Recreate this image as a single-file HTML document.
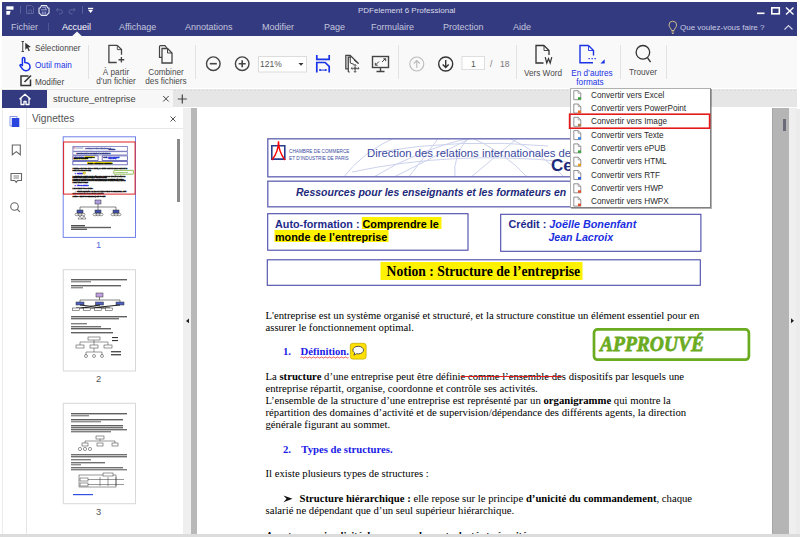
<!DOCTYPE html>
<html><head><meta charset="utf-8">
<style>
*{margin:0;padding:0;box-sizing:border-box}
html,body{width:800px;height:537px;overflow:hidden;background:#fff;font-family:"Liberation Sans",sans-serif}
.a{position:absolute}
.t{position:absolute;white-space:nowrap;line-height:1}
svg{position:absolute;overflow:visible}
#title{left:2px;top:2px;width:795px;height:34px;background:#333a80}
.menu{color:#c4c6dc;font-size:9px;top:23.4px}
#ribbon{left:2px;top:36px;width:795px;height:51.5px;background:#f9f9f9}
.rt{color:#444;font-size:8.2px}
.rc{color:#4a4a4a;font-size:8.2px;text-align:center;width:60px}
.sep{position:absolute;width:1px;background:#e2e2e2}
#tabbar{left:2px;top:89px;width:795px;height:18px;background:#e6e6e6}
#side{left:1.5px;top:108px;width:25px;height:426px;background:#fff;border-left:1px solid #ebebeb;border-right:1px solid #e4e4e4}
#panel{left:26px;top:108px;width:157px;height:426px;background:#fff;border-left:1px solid #e6e6e6}
#docbg{left:183px;top:108px;width:614px;height:426px;background:#efefef}
#page{left:197px;top:108px;width:575px;height:426px;background:#fff}
#bottom{left:0;top:534px;width:800px;height:3px;background:#dcdcdc}
.serif{font-family:"Liberation Serif",serif}
.mi{color:#2a2a2a;font-size:8.2px;left:591px}
.th .t{-webkit-text-stroke:2.5px currentColor}
.th rect{stroke-width:6px}
</style></head><body>
<!-- title bar -->
<div id="title" class="a"></div>
<!-- quick access -->
<svg style="left:0;top:0" width="100" height="20">
  <rect x="6.3" y="6.3" width="7.2" height="3.4" fill="#fff"/>
  <path d="M6.3 10.9h4.3l-1 3.8h-3.3z" fill="#fff"/>
  <line x1="20.5" y1="6" x2="20.5" y2="13.5" stroke="#5a609a" stroke-width="1"/>
  <path d="M26.5 5.5h5l2 2v6h-7z" fill="none" stroke="#5d639c" stroke-width="1"/>
  <path d="M29 13v-3h2.5v3" fill="none" stroke="#5d639c" stroke-width=".8"/>
  <path d="M41.5 5.6h5l1.2 2.2 1.3.4v4.8l-1.3 1.2-1.2 1.2h-5l-1.2-1.2-1.3-1.2v-4.8l1.3-.4z" fill="none" stroke="#e4e6f2" stroke-width="1.1"/><path d="M42.3 7.3h3.4v2M41 9.8h6M42.3 11.5v3M45.7 11.5v3M44 11.5v3" fill="none" stroke="#b8bde0" stroke-width=".8"/>
  <path d="M58 8l-1.8 1.8 1.8 1.8 M56.5 9.8h4a2 2 0 0 1 0 4h-1.5" fill="none" stroke="#5d639c" stroke-width="1"/>
  <path d="M73.5 8l1.8 1.8-1.8 1.8 M75 9.8h-4a2 2 0 0 0 0 4h1.5" fill="none" stroke="#5d639c" stroke-width="1"/>
  <line x1="82.5" y1="6.2" x2="82.5" y2="13.7" stroke="#5a609a" stroke-width="1"/>
  <rect x="88" y="7.8" width="5.2" height="1.2" fill="#fff"/>
  <path d="M88 9.8h5.2l-2.6 3.2z" fill="#fff"/>
</svg>
<div class="t" style="left:358px;top:7px;color:#d8d9e8;font-size:8px">PDFelement 6 Professional</div>
<div class="t menu" style="left:11px">Fichier</div>
<div class="a" style="left:47.5px;top:23px;width:1px;height:7.5px;background:#50568f"></div>
<div class="t menu" style="left:62px;color:#fff">Accueil</div>
<svg style="left:72px;top:31px" width="10" height="6"><path d="M0 5.2L5 0.5 10 5.2z" fill="#f9f9f9"/></svg>
<div class="t menu" style="left:119px">Affichage</div>
<div class="t menu" style="left:185px">Annotations</div>
<div class="t menu" style="left:262px">Modifier</div>
<div class="t menu" style="left:324px">Page</div>
<div class="t menu" style="left:371px">Formulaire</div>
<div class="t menu" style="left:443px">Protection</div>
<div class="t menu" style="left:513px">Aide</div>
<!-- window controls -->
<svg style="left:750px;top:0" width="50" height="36">
  <rect x="7" y="12.5" width="7.5" height="1.6" fill="#fff"/>
  <rect x="21.8" y="7.8" width="7.5" height="6" fill="none" stroke="#fff" stroke-width="1.6"/>
  <path d="M36 7.5l7.5 7 M43.5 7.5l-7.5 7" stroke="#fff" stroke-width="1.4"/>
  <path d="M34.5 29.5l4-4 4 4" fill="none" stroke="#d0d2e4" stroke-width="1.2"/>
</svg>
<svg style="left:666px;top:20px" width="14" height="16">
  <path d="M5.5 10.5c0-2-2.5-3-2.5-5.5a3.8 3.8 0 0 1 7.6 0c0 2.5-2.5 3.5-2.5 5.5z" fill="none" stroke="#c9b98a" stroke-width="1"/>
  <path d="M5.5 12h2.6M6 13.5h1.6" stroke="#c9b98a" stroke-width="1"/>
</svg>
<div class="t" style="left:680px;top:24px;color:#c9cbe0;font-size:8px">Que voulez-vous faire ?</div>

<!-- ribbon -->
<div id="ribbon" class="a"></div>
<svg style="left:0;top:36px" width="800" height="53">
  <!-- select -->
  <path d="M21.5 5.5h2.5M22.75 5.5v10M21.5 15.5h2.5" stroke="#444" stroke-width="1" fill="none"/>
  <path d="M25.3 6.8l5.6 4.2-2.6.4 1.6 3.2-1.2.6-1.6-3.2-1.8 1.8z" fill="#333"/>
  <!-- hand -->
  <path d="M22.4 29.5V22.6a1.2 1.2 0 0 1 2.4 0v4c2.2 .2 4.4 1 5 2.6.5 1.5.2 3.2-.8 4.3-.9 1-2.2 1.3-3.5 1.2-1.4-.1-2.4-.8-3.1-1.8l-2.3-3.2c-.5-.7.4-1.6 1.1-1z" fill="none" stroke="#1a33e6" stroke-width="1.5" stroke-linejoin="round"/>
  <!-- modify -->
  <path d="M28.5 40H21v9.5h9.5v-6" fill="none" stroke="#333" stroke-width="1.5"/>
  <path d="M24.5 46l6.5-6.5" stroke="#333" stroke-width="1.6"/>
  <!-- a partir -->
  <path d="M117.3 9.4H108.9V26.5h7.8" fill="none" stroke="#444" stroke-width="1.3"/>
  <path d="M117.3 9.4l4.2 4.2v5.2" fill="none" stroke="#444" stroke-width="1.3"/>
  <path d="M117.3 9.4v4.2h4.2" fill="none" stroke="#444" stroke-width=".9"/>
  <path d="M121.4 20.9v5.7M118.55 23.75h5.7" stroke="#444" stroke-width="1.3"/>
  <!-- combiner -->
  <path d="M162.3 21.3H159.5V10.6a1 1 0 0 1 1-1H165l1.8 2.4" fill="none" stroke="#444" stroke-width="1.2"/>
  <path d="M162 12.5h5.5l4.5 4.5v10h-10z" fill="#f9f9f9" stroke="#444" stroke-width="1.3"/>
  <path d="M167.5 12.5v4.5h4.5" fill="none" stroke="#444" stroke-width="1"/>
  <!-- zoom out/in -->
  <circle cx="213.3" cy="27.7" r="6.8" fill="none" stroke="#444" stroke-width="1.4"/>
  <path d="M209.8 27.7h7" stroke="#444" stroke-width="1.6"/>
  <circle cx="242.2" cy="27.7" r="6.8" fill="none" stroke="#444" stroke-width="1.4"/>
  <path d="M238.7 27.7h7M242.2 24.2v7" stroke="#444" stroke-width="1.6"/>
  <!-- zoom box -->
  <rect x="258.5" y="20.5" width="48" height="15.5" fill="#fff" stroke="#dcdcdc" stroke-width="1"/>
  <path d="M298.5 27h5l-2.5 2.8z" fill="#333"/>
  <!-- fit width (blue) -->
  <path d="M316.8 19v4.4h12.4v-4.4" fill="none" stroke="#1a33e6" stroke-width="1.7"/>
  <path d="M316.8 36.6v-10.1h8.3l4.1 3.8v6.3" fill="none" stroke="#1a33e6" stroke-width="1.7"/>
  <path d="M320 34.1h5.8" stroke="#1a33e6" stroke-width="1"/>
  <circle cx="320" cy="34.1" r="1" fill="#1a33e6"/><circle cx="325.8" cy="34.1" r="1" fill="#1a33e6"/>
  <!-- page move -->
  <path d="M350.3 19.3h-4.5v13.5h2.4" fill="#ddd" stroke="#444" stroke-width="1.2"/>
  <path d="M348.3 36v-14.8h2.2" fill="none" stroke="#444" stroke-width="1.2"/>
  <path d="M350 19.3l8.5 8.2" fill="none" stroke="#444" stroke-width="1.2"/>
  <path d="M350.3 19.5v7.5l4 1.5M354 24.2l4.5 3.3" fill="none" stroke="#444" stroke-width="1"/>
  <path d="M348.3 36h1.5" stroke="#444" stroke-width="1.2"/>
  <circle cx="355.1" cy="32.4" r="1.6" fill="#999"/>
  <path d="M355.1 28.5v7.8M351.2 32.4h7.8" stroke="#555" stroke-width=".9"/>
  <path d="M354 29.6l1.1-1.1 1.1 1.1M354 35.2l1.1 1.1 1.1-1.1M352.3 31.3l-1.1 1.1 1.1 1.1M357.9 31.3l1.1 1.1-1.1 1.1" fill="none" stroke="#444" stroke-width="1"/>
  <!-- monitor -->
  <rect x="372.5" y="20.5" width="16" height="11" fill="none" stroke="#444" stroke-width="1.4"/>
  <path d="M380.5 31.5v3.5M376.5 35.5h8" stroke="#444" stroke-width="1.4"/>
  <path d="M375.5 29l3.5-3.5M385.5 22.5l-3.5 3.5" stroke="#444" stroke-width="1"/>
  <path d="M375.3 26.8v2.4h2.4M385.7 25.2v-2.4h-2.4" fill="none" stroke="#444" stroke-width="1"/>
  <!-- up / down -->
  <circle cx="416.8" cy="28" r="7" fill="none" stroke="#bbb" stroke-width="1.1"/>
  <path d="M416.8 32v-7.5M413.8 27.5l3-3 3 3" fill="none" stroke="#bbb" stroke-width="1.1"/>
  <circle cx="445.7" cy="28" r="7" fill="none" stroke="#333" stroke-width="1.4"/>
  <path d="M445.7 24v7.5M442.7 28.5l3 3 3-3" fill="none" stroke="#333" stroke-width="1.4"/>
  <rect x="462" y="20.5" width="22.5" height="13" fill="#fff" stroke="#dedede" stroke-width="1"/>
  <!-- vers word -->
  <path d="M544 9.5h-8v17.5h7.5" fill="none" stroke="#333" stroke-width="1.3"/>
  <path d="M544 9.5l5 5v4.5" fill="none" stroke="#333" stroke-width="1.3"/>
  <path d="M544 9.5v5h5" fill="none" stroke="#333" stroke-width=".9"/>
  <path d="M545.2 21.2l1.6 5.8 1.7-4.4 1.7 4.4 1.6-5.8" fill="none" stroke="#333" stroke-width="1.2"/>
  <!-- autres formats -->
  <path d="M588.5 9.5h-8.5v17.3h13" fill="none" stroke="#1a33e6" stroke-width="1.4"/>
  <path d="M588.5 9.5l5 5v5" fill="none" stroke="#1a33e6" stroke-width="1.4"/>
  <path d="M588.5 9.5v5h5" fill="none" stroke="#1a33e6" stroke-width=".9"/>
  <path d="M588.5 22.7h1.3M591.5 22.7h1.3M594.5 22.7h1.3" stroke="#1a33e6" stroke-width="1.3"/>
  <path d="M604.7 23.3v4.3h-4.3z" fill="#1a33e6"/>
  <!-- trouver -->
  <circle cx="642.9" cy="16.3" r="6.8" fill="none" stroke="#333" stroke-width="1.3"/>
  <path d="M647.4 21.6l3.2 4.6" stroke="#333" stroke-width="1.4"/>
</svg>
<div class="t rt" style="left:35px;top:45px">Sélectionner</div>
<div class="t rt" style="left:35px;top:61.5px;color:#1a33e6">Outil main</div>
<div class="t rt" style="left:35px;top:78.5px">Modifier</div>
<div class="sep" style="left:88px;top:45px;height:34px"></div>
<div class="t rc" style="left:86px;top:69px">À partir</div>
<div class="t rc" style="left:86px;top:78px">d’un fichier</div>
<div class="t rc" style="left:136px;top:69px">Combiner</div>
<div class="t rc" style="left:136px;top:78px">des fichiers</div>
<div class="sep" style="left:195px;top:45px;height:34px"></div>
<div class="t" style="left:260px;top:60px;color:#555;font-size:8.5px">121%</div>
<div class="sep" style="left:398px;top:45px;height:34px"></div>
<div class="t" style="left:471px;top:60px;color:#555;font-size:8.5px">1</div>
<div class="t" style="left:490px;top:60px;color:#777;font-size:8.5px">/</div>
<div class="t" style="left:500px;top:60px;color:#777;font-size:8.5px">18</div>
<div class="sep" style="left:516px;top:45px;height:34px"></div>
<div class="t rc" style="left:513px;top:69.5px">Vers Word</div>
<div class="t rc" style="left:562px;top:69.5px;color:#1a33e6">En d’autres</div>
<div class="t rc" style="left:560px;top:78.5px;color:#1a33e6">formats</div>
<div class="sep" style="left:620px;top:45px;height:34px"></div>
<div class="t rc" style="left:613px;top:69px">Trouver</div>
<div class="sep" style="left:666px;top:45px;height:34px"></div>

<!-- tab bar -->
<div id="tabbar" class="a"></div><div class="a" style="left:173.6px;top:89.5px;width:623px;height:1px;background:repeating-linear-gradient(90deg,#d9d9d9 0 2px,#e9e9e9 2px 4px)"></div>
<div class="a" style="left:2px;top:90px;width:45px;height:18px;background:#333a80"></div>
<svg style="left:17px;top:91px" width="16" height="16">
  <path d="M2.5 8.2L8 3.2l5.5 5M4 7v6.5h3v-3h2v3h3V7" fill="none" stroke="#fff" stroke-width="1.3" stroke-linejoin="round"/>
</svg>
<div class="a" style="left:47px;top:90px;width:126px;height:18px;background:#f7f7f7"></div>
<div class="t" style="left:53px;top:95px;color:#444;font-size:9.3px">structure_entreprise</div>
<svg style="left:160px;top:92px" width="30" height="14">
  <path d="M3.2 4l5.5 5.5M8.7 4l-5.5 5.5" stroke="#444" stroke-width="1"/>
  <path d="M22.3 2.5v9M17.8 7h9" stroke="#444" stroke-width="1.2"/>
</svg>

<!-- left -->
<div id="side" class="a"></div>
<svg style="left:2px;top:108px" width="24" height="110">
  <path d="M8 8.5h7v2" fill="none" stroke="#8d9ae8" stroke-width="1"/>
  <path d="M8 8.5v9.5h2" fill="none" stroke="#8d9ae8" stroke-width="1"/>
  <rect x="9.8" y="10" width="7.5" height="9" fill="#2a44e0"/>
  <path d="M10.3 46.8v-9.8h8v9.8l-4-3.2z" fill="none" stroke="#666" stroke-width="1.1"/>
  <path d="M9 65.5h10.5v7h-3.8l-1.5 1.8-1.5-1.8h-3.7z" fill="none" stroke="#666" stroke-width="1.1"/>
  <path d="M11.5 68h5.5M11.5 70h5.5" stroke="#666" stroke-width=".8"/>
  <circle cx="12.5" cy="98.5" r="3.8" fill="none" stroke="#666" stroke-width="1.1"/>
  <path d="M15.2 101.2l2.6 2.6" stroke="#666" stroke-width="1.2"/>
</svg>
<div id="panel" class="a"></div>
<div class="t" style="left:32px;top:114px;color:#555;font-size:10.2px">Vignettes</div>
<svg style="left:168px;top:114px" width="10" height="10"><path d="M2.5 2.5l5 5M7.5 2.5l-5 5" stroke="#555" stroke-width="1"/></svg>
<div class="a" style="left:27px;top:128px;width:156px;height:1px;background:#e8e8e8"></div>
<div class="a" style="left:176.5px;top:139px;width:3px;height:63px;background:#8a8a8a"></div>
<svg style="left:0;top:0" width="200" height="537">
<rect x="63.2" y="136.8" width="72.3" height="100.6" fill="#fff" stroke="#7080e8" stroke-width="1"/><rect x="95" y="200" width="6" height="4" fill="#b0a0e0" stroke="#333" stroke-width=".5"/><path d="M98 204v3M80 210v-3h36v3M98 207v3" fill="none" stroke="#333" stroke-width=".6"/><rect x="77" y="210" width="6" height="3" fill="#4050b0" stroke="#333" stroke-width=".5"/><ellipse cx="77" cy="214.5" rx="2" ry="1.3" fill="none" stroke="#333" stroke-width=".5"/><ellipse cx="83" cy="214.5" rx="2" ry="1.3" fill="none" stroke="#333" stroke-width=".5"/><ellipse cx="80" cy="214.5" rx="2" ry="1.3" fill="none" stroke="#333" stroke-width=".5"/><rect x="95" y="210" width="6" height="3" fill="#4050b0" stroke="#333" stroke-width=".5"/><ellipse cx="95" cy="214.5" rx="2" ry="1.3" fill="none" stroke="#333" stroke-width=".5"/><ellipse cx="101" cy="214.5" rx="2" ry="1.3" fill="none" stroke="#333" stroke-width=".5"/><ellipse cx="98" cy="214.5" rx="2" ry="1.3" fill="none" stroke="#333" stroke-width=".5"/><rect x="113" y="210" width="6" height="3" fill="#4050b0" stroke="#333" stroke-width=".5"/><ellipse cx="113" cy="214.5" rx="2" ry="1.3" fill="none" stroke="#333" stroke-width=".5"/><ellipse cx="119" cy="214.5" rx="2" ry="1.3" fill="none" stroke="#333" stroke-width=".5"/><ellipse cx="116" cy="214.5" rx="2" ry="1.3" fill="none" stroke="#333" stroke-width=".5"/><path d="M80 216l-2 3 4 0z M84 216l-2 3h4z" fill="none" stroke="#333" stroke-width=".5"/><rect x="71" y="225" width="14" height="1.4" fill="#505050"/><rect x="71" y="226.8" width="40" height="1.4" fill="#606060"/><rect x="71" y="228.6" width="16" height="1.4" fill="#606060"/><rect x="63.3" y="269.7" width="72.2" height="101.3" fill="#fff" stroke="#d8d8d8" stroke-width="1"/><rect x="71" y="279" width="56" height="1.4" fill="#606060"/><rect x="71" y="281" width="20" height="1.4" fill="#909090"/><rect x="71" y="285" width="50" height="1.4" fill="#606060"/><rect x="71" y="287" width="12" height="1.4" fill="#909090"/><rect x="96" y="293" width="7" height="4" fill="#c0a0e0" stroke="#333" stroke-width=".5"/><path d="M99.5 297v3M80 302v-2h40v2" fill="none" stroke="#333" stroke-width=".6"/><rect x="76" y="302" width="8" height="3" fill="#5060c0" stroke="#333" stroke-width=".5"/><rect x="95.5" y="302" width="8" height="3" fill="#5060c0" stroke="#333" stroke-width=".5"/><rect x="116" y="302" width="8" height="3" fill="#5060c0" stroke="#333" stroke-width=".5"/><path d="M76 308h34M80 305l25 3M100 305l-20 3M120 305l-30 3" stroke="#222" stroke-width="1.2"/><rect x="72.5" y="308" width="7" height="2.5" fill="#fff" stroke="#333" stroke-width=".5"/><rect x="83.5" y="308" width="7" height="2.5" fill="#fff" stroke="#333" stroke-width=".5"/><rect x="94.5" y="308" width="7" height="2.5" fill="#fff" stroke="#333" stroke-width=".5"/><rect x="105.5" y="308" width="7" height="2.5" fill="#fff" stroke="#333" stroke-width=".5"/><rect x="71" y="316" width="56" height="1.4" fill="#606060"/><rect x="71" y="318" width="48" height="1.4" fill="#707070"/><rect x="71" y="323" width="16" height="1.4" fill="#808080"/><rect x="71" y="326" width="30" height="1.4" fill="#707070"/><rect x="71" y="328" width="40" height="1.4" fill="#606060"/><rect x="71" y="332" width="42" height="1.4" fill="#606060"/><rect x="88" y="337" width="12" height="3" fill="#fff" stroke="#333" stroke-width=".5"/><path d="M94 340v2M80 345v-3h28v3M94 342v3" fill="none" stroke="#333" stroke-width=".5"/><rect x="76" y="345" width="8" height="3" fill="#fff" stroke="#333" stroke-width=".5"/><rect x="90" y="345" width="8" height="3" fill="#fff" stroke="#333" stroke-width=".5"/><rect x="104" y="345" width="8" height="3" fill="#fff" stroke="#333" stroke-width=".5"/><path d="M94 348v4M86 355v-3h16v3" fill="none" stroke="#333" stroke-width=".5"/><circle cx="86" cy="356" r="1.5" fill="none" stroke="#333" stroke-width=".5"/><circle cx="94" cy="356" r="1.5" fill="none" stroke="#333" stroke-width=".5"/><circle cx="102" cy="356" r="1.5" fill="none" stroke="#333" stroke-width=".5"/><rect x="112" y="337" width="6" height="1.1" fill="#333"/><rect x="112" y="340" width="6" height="1.1" fill="#333"/><rect x="111" y="351" width="10" height="1.4" fill="#505050"/><rect x="111" y="354" width="10" height="1.4" fill="#505050"/><rect x="63.3" y="403.3" width="72.2" height="100.4" fill="#fff" stroke="#d8d8d8" stroke-width="1"/><rect x="71" y="413" width="56" height="1.4" fill="#606060"/><rect x="71" y="415" width="18" height="1.4" fill="#909090"/><rect x="71" y="419" width="52" height="1.4" fill="#606060"/><rect x="71" y="421" width="30" height="1.4" fill="#909090"/><rect x="71" y="425" width="52" height="1.4" fill="#606060"/><rect x="71" y="427" width="52" height="1.4" fill="#707070"/><rect x="71" y="429" width="56" height="1.4" fill="#707070"/><rect x="71" y="431" width="40" height="1.4" fill="#808080"/><rect x="96" y="436" width="8" height="3" fill="#fff" stroke="#333" stroke-width=".5"/><path d="M100 439v2M85 443v-2h30v2" fill="none" stroke="#333" stroke-width=".5"/><rect x="82" y="443" width="6" height="3" fill="#fff" stroke="#333" stroke-width=".5"/><rect x="97" y="443" width="6" height="3" fill="#fff" stroke="#333" stroke-width=".5"/><rect x="112" y="443" width="6" height="3" fill="#fff" stroke="#333" stroke-width=".5"/><circle cx="80" cy="449" r="1.6" fill="none" stroke="#333" stroke-width=".5"/><circle cx="85" cy="449" r="1.6" fill="none" stroke="#333" stroke-width=".5"/><circle cx="90" cy="449" r="1.6" fill="none" stroke="#333" stroke-width=".5"/><rect x="71" y="454" width="56" height="1.4" fill="#707070"/><rect x="71" y="456" width="56" height="1.4" fill="#707070"/><rect x="71" y="459" width="20" height="1.4" fill="#808080"/><rect x="71" y="462" width="34" height="1.4" fill="#707070"/><rect x="71" y="464" width="10" height="1.4" fill="#909090"/><rect x="71" y="467" width="52" height="1.4" fill="#707070"/><rect x="71" y="469" width="56" height="1.4" fill="#808080"/><rect x="79" y="475" width="37" height="12" fill="none" stroke="#333" stroke-width=".5"/><rect x="103" y="473" width="10" height="3" fill="#fff" stroke="#333" stroke-width=".5"/><rect x="80" y="478" width="8" height="3" fill="none" stroke="#333" stroke-width=".5"/><rect x="80" y="483" width="8" height="3" fill="none" stroke="#333" stroke-width=".5"/><path d="M88 479.5h36M88 484.5h36M100 477v9M108 477v9M116 477v9" stroke="#333" stroke-width=".5"/><rect x="73" y="494" width="20" height="1.2" fill="#3050e0"/></svg>
<div class="a" style="left:63.7px;top:137px;width:71.3px;height:99.8px;overflow:hidden"><div class="a th" style="left:0;top:0;width:800px;height:537px;transform-origin:0 0;transform:scale(0.1257) translate(-197px,-64px)"><div class="a"  style="left:0;top:0">
<svg style="left:0;top:0" width="800" height="537">
  <defs><clipPath id="hb2"><rect x="268" y="139" width="432" height="37.5"/></clipPath></defs>
  <g clip-path="url(#hb2)" fill="none" stroke="#ccd2ec" stroke-width="1">
    <path d="M343 178 Q362 152 398 136"/>
    <path d="M372 178 Q420 148 478 136"/>
    <path d="M408 178 Q428 152 440 136"/>
    <path d="M455 178 Q452 155 470 136"/>
    <path d="M468 136 Q505 152 528 178"/>
    <path d="M505 136 Q545 155 565 178"/>
    <path d="M352 172 Q455 150 568 162"/>
    <path d="M378 152 Q460 138 548 146"/>
    <path d="M392 178 L475 136"/>
    <path d="M520 136 L470 178"/>
  </g>
  <rect x="267.8" y="138.8" width="433" height="38" fill="none" stroke="#6c6cb8" stroke-width="1.4"/>
  <rect x="267.8" y="181.2" width="433" height="25.6" fill="none" stroke="#6c6cb8" stroke-width="1.4"/>
  <rect x="267.7" y="213.7" width="200.3" height="36.5" fill="none" stroke="#4a4aaa" stroke-width="1.1"/>
  <rect x="500.7" y="214.3" width="200.2" height="37" fill="none" stroke="#4a4aaa" stroke-width="1.1"/>
  <rect x="267.3" y="259.8" width="433" height="25.5" fill="none" stroke="#4a4aaa" stroke-width="1.1"/>
  <!-- logo -->
  <path d="M271.8 145.8h13v13.3h-13z" fill="none" stroke="#2a3c8e" stroke-width="1.6"/>
  <path d="M278.5 141.3 C278.5 150 276 155 272 160 M278.5 141.3 C278.5 150 281 155 285 160" fill="none" stroke="#f00" stroke-width="1.4"/>
  <!-- highlights -->
  <rect x="361.8" y="217" width="79.7" height="12" fill="#fff200"/>
  <rect x="274.5" y="230" width="114" height="12" fill="#fff200"/>
  <rect x="380.5" y="262" width="202" height="18" fill="#fff200"/>
</svg>
<div class="t" style="left:289px;top:150px;color:#3b4aa0;font-size:4.7px">CHAMBRE DE COMMERCE</div>
<div class="t" style="left:289px;top:156.5px;color:#3b4aa0;font-size:4.7px">ET D’INDUSTRIE DE PARIS</div>
<div class="t" style="left:367px;top:147.5px;color:#3b4aa0;font-size:11.3px">Direction des relations internationales de</div>
<div class="t" style="left:551px;top:157px;color:#1d2a7a;font-size:17px;font-weight:bold">Centre</div>
<div class="t" style="left:296px;top:187px;color:#1d2a7a;font-size:10.5px;font-weight:bold;font-style:italic">Ressources pour les enseignants et les formateurs en</div>
<div class="t" style="left:275px;top:219px;color:#1d2a8a;font-size:10.8px;font-weight:bold">Auto-formation : <span style="color:#000">Comprendre le</span></div>
<div class="t" style="left:275px;top:231.5px;color:#000;font-size:10.8px;font-weight:bold">monde de l’entreprise</div>
<div class="t" style="left:508.5px;top:219px;color:#1d2a8a;font-size:10.8px;font-weight:bold">Crédit : <span style="color:#1a2ee0;font-style:italic">Joëlle Bonenfant</span></div>
<div class="t" style="left:548.4px;top:231.5px;color:#1a2ee0;font-size:10.6px;font-weight:bold;font-style:italic">Jean Lacroix</div>
<div class="t serif" style="left:386.6px;top:265px;color:#000;font-size:13.6px;font-weight:bold">Notion : Structure de l’entreprise</div>

<div class="t serif" style="left:265.5px;top:310px;font-size:10.7px;color:#000">L'entreprise est un système organisé et structuré, et la structure constitue un élément essentiel pour en</div>
<div class="t serif" style="left:265.5px;top:321.5px;font-size:10.7px;color:#000">assurer le fonctionnement optimal.</div>
<div class="t serif" style="left:283px;top:346px;font-size:10.7px;color:#1a1ae6;font-weight:bold">1.</div>
<div class="t serif" style="left:300.5px;top:346px;font-size:10.7px;color:#1a1ae6;font-weight:bold">Définition.</div>
<svg style="left:0;top:0" width="800" height="537">
  <path d="M300.5 357.5 q1 -1 2 0 t2 0 t2 0 t2 0 t2 0 t2 0 t2 0 t2 0 t2 0 t2 0 t2 0 t2 0 t2 0 t2 0 t2 0 t2 0 t2 0 t2 0 t2 0 t2 0 t2 0 t2 0 t2 0 t2 0" fill="none" stroke="#e83a3a" stroke-width=".9"/>
  <rect x="350.3" y="343.3" width="15.8" height="15.8" rx="2.5" fill="#ffe000" stroke="#c8b000" stroke-width=".8"/>
  <path d="M358.2 346.3c-3.2 0-5.3 1.8-5.3 3.8 0 1.2.7 2.2 1.8 2.9l-.8 2.2 2.6-1.5c.5.1 1.1.2 1.7.2 3.2 0 5.3-1.8 5.3-3.8s-2.1-3.8-5.3-3.8z" fill="#fff" stroke="#444" stroke-width=".9"/>
  <rect x="594" y="329.4" width="154.9" height="30.3" rx="3.5" fill="none" stroke="#6aab1f" stroke-width="2.7"/>
</svg>
<div class="t serif" style="left:600px;top:333.5px;font-size:19.5px;color:#6aab1f;font-weight:bold;font-style:italic;transform:scaleY(1.08);transform-origin:0 0;-webkit-text-stroke:.7px #6aab1f">APPROUVÉ</div>

<div class="t serif" style="left:265.5px;top:370.5px;font-size:10.7px;color:#000">La <b>structure</b> d’une entreprise peut être défini<span style="text-decoration:line-through;text-decoration-color:#e02020">e comme l’ensemble de</span>s dispositifs par lesquels une</div>
<div class="t serif" style="left:265.5px;top:382.5px;font-size:10.7px;color:#000">entreprise répartit, organise, coordonne et contrôle ses activités.</div>
<div class="t serif" style="left:265.5px;top:395px;font-size:10.7px;color:#000">L’ensemble de la structure d’une entreprise est représenté par un <b>organigramme</b> qui montre la</div>
<div class="t serif" style="left:265.5px;top:407px;font-size:10.7px;color:#000">répartition des domaines d’activité et de supervision/dépendance des différents agents, la direction</div>
<div class="t serif" style="left:265.5px;top:419px;font-size:10.7px;color:#000">générale figurant au sommet.</div>
<div class="t serif" style="left:283px;top:444px;font-size:10.7px;color:#1a1ae6;font-weight:bold">2.</div>
<div class="t serif" style="left:301.3px;top:444px;font-size:10.7px;color:#1a1ae6;font-weight:bold">Types de structures.</div>
<div class="t serif" style="left:265.5px;top:468.3px;font-size:10.7px;color:#000">Il existe plusieurs types de structures :</div>
<svg style="left:283px;top:494px" width="12" height="10"><path d="M0.5 1.5L9.5 4.8 0.5 8.2 3.5 4.8z" fill="#111"/></svg>
<div class="t serif" style="left:299.5px;top:493px;font-size:10.7px;color:#000"><b>Structure hiérarchique :</b> elle repose sur le principe <b>d’unicité du commandement</b>, chaque</div>
<div class="t serif" style="left:265.5px;top:504.5px;font-size:10.7px;color:#000">salarié ne dépendant que d’un seul supérieur hiérarchique.</div>
<div class="t serif" style="left:265.5px;top:530px;font-size:10.7px;color:#000;font-style:italic;font-weight:bold;text-decoration:underline">Avantages : simplicité du commandement, clarté et sécurité</div>
</div></div></div>
<svg style="left:0;top:0" width="200" height="300"><rect x="63.6" y="142" width="71.5" height="52.1" fill="none" stroke="#e02020" stroke-width="1"/></svg>
<div class="t" style="left:96px;top:241px;color:#5a6ae0;font-size:9.3px">1</div><div class="t" style="left:96px;top:374.5px;color:#555;font-size:9.3px">2</div><div class="t" style="left:96px;top:508px;color:#555;font-size:9.3px">3</div>


<div id="docbg" class="a"></div>
<div id="page" class="a"></div>
<!-- PAGE CONTENT -->
<div class="a" id="pc" style="left:0;top:0">
<svg style="left:0;top:0" width="800" height="537">
  <defs><clipPath id="hb"><rect x="268" y="139" width="432" height="37.5"/></clipPath></defs>
  <g clip-path="url(#hb)" fill="none" stroke="#ccd2ec" stroke-width="1">
    <path d="M343 178 Q362 152 398 136"/>
    <path d="M372 178 Q420 148 478 136"/>
    <path d="M408 178 Q428 152 440 136"/>
    <path d="M455 178 Q452 155 470 136"/>
    <path d="M468 136 Q505 152 528 178"/>
    <path d="M505 136 Q545 155 565 178"/>
    <path d="M352 172 Q455 150 568 162"/>
    <path d="M378 152 Q460 138 548 146"/>
    <path d="M392 178 L475 136"/>
    <path d="M520 136 L470 178"/>
  </g>
  <rect x="267.8" y="138.8" width="433" height="38" fill="none" stroke="#6c6cb8" stroke-width="1.4"/>
  <rect x="267.8" y="181.2" width="433" height="25.6" fill="none" stroke="#6c6cb8" stroke-width="1.4"/>
  <rect x="267.7" y="213.7" width="200.3" height="36.5" fill="none" stroke="#4a4aaa" stroke-width="1.1"/>
  <rect x="500.7" y="214.3" width="200.2" height="37" fill="none" stroke="#4a4aaa" stroke-width="1.1"/>
  <rect x="267.3" y="259.8" width="433" height="25.5" fill="none" stroke="#4a4aaa" stroke-width="1.1"/>
  <!-- logo -->
  <path d="M271.8 145.8h13v13.3h-13z" fill="none" stroke="#2a3c8e" stroke-width="1.6"/>
  <path d="M278.5 141.3 C278.5 150 276 155 272 160 M278.5 141.3 C278.5 150 281 155 285 160" fill="none" stroke="#f00" stroke-width="1.4"/>
  <!-- highlights -->
  <rect x="361.8" y="217" width="79.7" height="12" fill="#fff200"/>
  <rect x="274.5" y="230" width="114" height="12" fill="#fff200"/>
  <rect x="380.5" y="262" width="202" height="18" fill="#fff200"/>
</svg>
<div class="t" style="left:289px;top:150px;color:#3b4aa0;font-size:4.7px">CHAMBRE DE COMMERCE</div>
<div class="t" style="left:289px;top:156.5px;color:#3b4aa0;font-size:4.7px">ET D’INDUSTRIE DE PARIS</div>
<div class="t" style="left:367px;top:147.5px;color:#3b4aa0;font-size:11.3px">Direction des relations internationales de</div>
<div class="t" style="left:551px;top:157px;color:#1d2a7a;font-size:17px;font-weight:bold">Centre</div>
<div class="t" style="left:296px;top:187px;color:#1d2a7a;font-size:10.5px;font-weight:bold;font-style:italic">Ressources pour les enseignants et les formateurs en</div>
<div class="t" style="left:275px;top:219px;color:#1d2a8a;font-size:10.8px;font-weight:bold">Auto-formation : <span style="color:#000">Comprendre le</span></div>
<div class="t" style="left:275px;top:231.5px;color:#000;font-size:10.8px;font-weight:bold">monde de l’entreprise</div>
<div class="t" style="left:508.5px;top:219px;color:#1d2a8a;font-size:10.8px;font-weight:bold">Crédit : <span style="color:#1a2ee0;font-style:italic">Joëlle Bonenfant</span></div>
<div class="t" style="left:548.4px;top:231.5px;color:#1a2ee0;font-size:10.6px;font-weight:bold;font-style:italic">Jean Lacroix</div>
<div class="t serif" style="left:386.6px;top:265px;color:#000;font-size:13.6px;font-weight:bold">Notion : Structure de l’entreprise</div>

<div class="t serif" style="left:265.5px;top:310px;font-size:10.7px;color:#000">L'entreprise est un système organisé et structuré, et la structure constitue un élément essentiel pour en</div>
<div class="t serif" style="left:265.5px;top:321.5px;font-size:10.7px;color:#000">assurer le fonctionnement optimal.</div>
<div class="t serif" style="left:283px;top:346px;font-size:10.7px;color:#1a1ae6;font-weight:bold">1.</div>
<div class="t serif" style="left:300.5px;top:346px;font-size:10.7px;color:#1a1ae6;font-weight:bold">Définition.</div>
<svg style="left:0;top:0" width="800" height="537">
  <path d="M300.5 357.5 q1 -1 2 0 t2 0 t2 0 t2 0 t2 0 t2 0 t2 0 t2 0 t2 0 t2 0 t2 0 t2 0 t2 0 t2 0 t2 0 t2 0 t2 0 t2 0 t2 0 t2 0 t2 0 t2 0 t2 0 t2 0" fill="none" stroke="#e83a3a" stroke-width=".9"/>
  <rect x="350.3" y="343.3" width="15.8" height="15.8" rx="2.5" fill="#ffe000" stroke="#c8b000" stroke-width=".8"/>
  <path d="M358.2 346.3c-3.2 0-5.3 1.8-5.3 3.8 0 1.2.7 2.2 1.8 2.9l-.8 2.2 2.6-1.5c.5.1 1.1.2 1.7.2 3.2 0 5.3-1.8 5.3-3.8s-2.1-3.8-5.3-3.8z" fill="#fff" stroke="#444" stroke-width=".9"/>
  <rect x="594" y="329.4" width="154.9" height="30.3" rx="3.5" fill="none" stroke="#6aab1f" stroke-width="2.7"/>
</svg>
<div class="t serif" style="left:600px;top:333.5px;font-size:19.5px;color:#6aab1f;font-weight:bold;font-style:italic;transform:scaleY(1.08);transform-origin:0 0;-webkit-text-stroke:.7px #6aab1f">APPROUVÉ</div>

<div class="t serif" style="left:265.5px;top:370.5px;font-size:10.7px;color:#000">La <b>structure</b> d’une entreprise peut être défini<span style="text-decoration:line-through;text-decoration-color:#e02020">e comme l’ensemble de</span>s dispositifs par lesquels une</div>
<div class="t serif" style="left:265.5px;top:382.5px;font-size:10.7px;color:#000">entreprise répartit, organise, coordonne et contrôle ses activités.</div>
<div class="t serif" style="left:265.5px;top:395px;font-size:10.7px;color:#000">L’ensemble de la structure d’une entreprise est représenté par un <b>organigramme</b> qui montre la</div>
<div class="t serif" style="left:265.5px;top:407px;font-size:10.7px;color:#000">répartition des domaines d’activité et de supervision/dépendance des différents agents, la direction</div>
<div class="t serif" style="left:265.5px;top:419px;font-size:10.7px;color:#000">générale figurant au sommet.</div>
<div class="t serif" style="left:283px;top:444px;font-size:10.7px;color:#1a1ae6;font-weight:bold">2.</div>
<div class="t serif" style="left:301.3px;top:444px;font-size:10.7px;color:#1a1ae6;font-weight:bold">Types de structures.</div>
<div class="t serif" style="left:265.5px;top:468.3px;font-size:10.7px;color:#000">Il existe plusieurs types de structures :</div>
<svg style="left:283px;top:494px" width="12" height="10"><path d="M0.5 1.5L9.5 4.8 0.5 8.2 3.5 4.8z" fill="#111"/></svg>
<div class="t serif" style="left:299.5px;top:493px;font-size:10.7px;color:#000"><b>Structure hiérarchique :</b> elle repose sur le principe <b>d’unicité du commandement</b>, chaque</div>
<div class="t serif" style="left:265.5px;top:504.5px;font-size:10.7px;color:#000">salarié ne dépendant que d’un seul supérieur hiérarchique.</div>
<div class="t serif" style="left:265.5px;top:530px;font-size:10.7px;color:#000;font-style:italic;font-weight:bold;text-decoration:underline">Avantages : simplicité du commandement, clarté et sécurité</div>
</div>

<div class="a" style="left:569.5px;top:87.8px;width:141px;height:120.6px;background:#fff;border:1px solid #b0b0b0;border-right-color:#808080;border-bottom-color:#808080;box-shadow:1px 1px 0 rgba(0,0,0,.3)"></div>
<svg style="left:0;top:0" width="800" height="537">
<path d="M573.8 90.7h4.4l2.6 2.6v6.4h-7z" fill="#fff" stroke="#777" stroke-width=".8"/><path d="M578.2 90.7v2.6h2.6" fill="none" stroke="#777" stroke-width=".6"/><rect x="578" y="97.2" width="3" height="2.5" fill="#3aa53a"/>
<path d="M573.8 104.0h4.4l2.6 2.6v6.4h-7z" fill="#fff" stroke="#777" stroke-width=".8"/><path d="M578.2 104.0v2.6h2.6" fill="none" stroke="#777" stroke-width=".6"/><rect x="578" y="110.5" width="3" height="2.5" fill="#e8702a"/>
<path d="M573.8 117.3h4.4l2.6 2.6v6.4h-7z" fill="#fff" stroke="#777" stroke-width=".8"/><path d="M578.2 117.3v2.6h2.6" fill="none" stroke="#777" stroke-width=".6"/><rect x="578" y="123.8" width="3" height="2.5" fill="#b08050"/>
<path d="M573.8 130.6h4.4l2.6 2.6v6.4h-7z" fill="#fff" stroke="#777" stroke-width=".8"/><path d="M578.2 130.6v2.6h2.6" fill="none" stroke="#777" stroke-width=".6"/><rect x="578" y="137.1" width="3" height="2.5" fill="#3a8ae8"/>
<path d="M573.8 143.9h4.4l2.6 2.6v6.4h-7z" fill="#fff" stroke="#777" stroke-width=".8"/><path d="M578.2 143.9v2.6h2.6" fill="none" stroke="#777" stroke-width=".6"/><rect x="578" y="150.4" width="3" height="2.5" fill="#3aa53a"/>
<path d="M573.8 157.2h4.4l2.6 2.6v6.4h-7z" fill="#fff" stroke="#777" stroke-width=".8"/><path d="M578.2 157.2v2.6h2.6" fill="none" stroke="#777" stroke-width=".6"/><rect x="578" y="163.7" width="3" height="2.5" fill="#e8a020"/>
<path d="M573.8 170.5h4.4l2.6 2.6v6.4h-7z" fill="#fff" stroke="#777" stroke-width=".8"/><path d="M578.2 170.5v2.6h2.6" fill="none" stroke="#777" stroke-width=".6"/><rect x="578" y="177.0" width="3" height="2.5" fill="#2a5ae8"/>
<path d="M573.8 183.8h4.4l2.6 2.6v6.4h-7z" fill="#fff" stroke="#777" stroke-width=".8"/><path d="M578.2 183.8v2.6h2.6" fill="none" stroke="#777" stroke-width=".6"/><rect x="578" y="190.3" width="3" height="2.5" fill="#e05030"/>
<path d="M573.8 197.1h4.4l2.6 2.6v6.4h-7z" fill="#fff" stroke="#777" stroke-width=".8"/><path d="M578.2 197.1v2.6h2.6" fill="none" stroke="#777" stroke-width=".6"/><rect x="578" y="203.6" width="3" height="2.5" fill="#e05030"/>
<rect x="569.6" y="114.2" width="140" height="14" fill="none" stroke="#e41a1a" stroke-width="1.6"/>
</svg>
<div class="t mi" style="top:91.7px">Convertir vers Excel</div>
<div class="t mi" style="top:105.0px">Convertir vers PowerPoint</div>
<div class="t mi" style="top:118.3px">Convertir vers Image</div>
<div class="t mi" style="top:131.6px">Convertir vers Texte</div>
<div class="t mi" style="top:144.9px">Convertir vers ePUB</div>
<div class="t mi" style="top:158.2px">Convertir vers HTML</div>
<div class="t mi" style="top:171.5px">Convertir vers RTF</div>
<div class="t mi" style="top:184.8px">Convertir vers HWP</div>
<div class="t mi" style="top:198.1px">Convertir vers HWPX</div>
<div class="a" style="left:191px;top:108px;width:6px;height:426px;background:#b8b8b8"></div>
<div class="a" style="left:772.3px;top:108px;width:16.5px;height:426px;background:#b5b5b5;border-left:1px solid #a5a5a5"></div>
<div class="a" style="left:782.5px;top:119px;width:3px;height:12px;background:#6a6a78"></div>
<svg style="left:180px;top:310px" width="20" height="20"><path d="M9 8.6l-3 2.3 3 2.3z" fill="#222"/></svg>
<svg style="left:785px;top:310px" width="15" height="20"><path d="M6 8.3l3 2.5-3 2.5z" fill="#222"/></svg>
<div class="a" style="left:796px;top:109px;width:4px;height:425px;background:#ececec"></div>
<div id="bottom" class="a"></div>
</body></html>
